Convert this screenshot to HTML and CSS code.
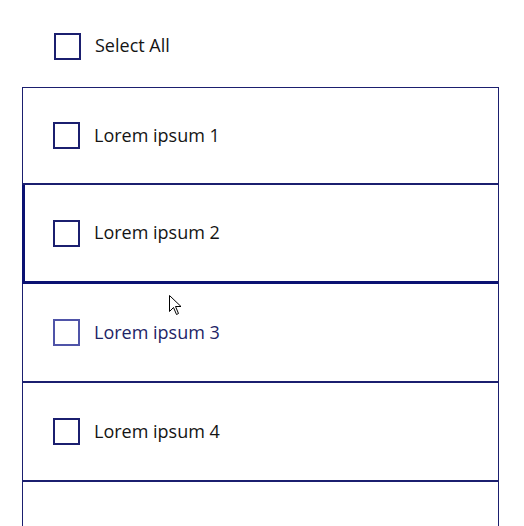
FILE: index.html
```html
<!DOCTYPE html>
<html>
<head>
<meta charset="utf-8">
<link rel="stylesheet" href="styles.css">
</head>
<body>
<div class="page">
  <div class="select-all">
    <span class="box"></span>
    <span class="label">Select All</span>
  </div>
  <div class="list">
    <div class="row first"><span class="box"></span><span class="label">Lorem ipsum 1</span></div>
    <div class="row selected"><span class="box"></span><span class="label">Lorem ipsum 2</span></div>
    <div class="row hover"><span class="box"></span><span class="label">Lorem ipsum 3</span></div>
    <div class="row"><span class="box"></span><span class="label">Lorem ipsum 4</span></div>
    <div class="row"></div>
  </div>
  <svg class="cursor" width="13" height="21" viewBox="0 0 13 21">
    <path d="M0.5 0.5 L0.5 16.5 L4.5 12.5 L7.5 19.5 L9.5 18.5 L6.5 11.5 L12 11.5 Z" fill="#fff" stroke="#000" stroke-width="1" stroke-linejoin="miter"/>
  </svg>
</div>
</body>
</html>
```
FILE: styles.css
```css
html, body {
  margin: 0;
  padding: 0;
  background: #ffffff;
}
.page {
  position: relative;
  width: 524px;
  height: 526px;
  overflow: hidden;
  font-family: "Open Sans", "Noto Sans", sans-serif;
  font-size: 18px;
  color: #141414;
}
.select-all {
  height: 87px;
  display: flex;
  align-items: flex-start;
  padding: 33px 0 0 54px;
  box-sizing: border-box;
}
.select-all .label {
  margin-left: 14px;
  line-height: 24px;
}
.box {
  display: inline-block;
  width: 27px;
  height: 27px;
  box-sizing: border-box;
  border: 2px solid #1b1f6f;
  background: #fff;
  flex: none;
}
.list {
  margin-left: 22px;
  width: 477px;
  box-sizing: border-box;
  border: 1px solid #1b1f6f;
  border-bottom: none;
}
.row {
  height: 99px;
  box-sizing: border-box;
  border-bottom: 2px solid #1b1f6f;
  display: flex;
  align-items: center;
  padding-left: 30px;
}
.row.first {
  height: 97px;
}
.row .label {
  margin-left: 14px;
  line-height: 24px;
  margin-bottom: 2px;
}
.row.selected {
  border-left: 3px solid #0b1272;
  border-bottom: 3px solid #0b1272;
  margin-left: -1px;
  padding-left: 28px;
}
.row.hover .box {
  border-color: #4f54a8;
}
.row.hover .label {
  color: #1e2466;
}
.cursor {
  position: absolute;
  left: 169px;
  top: 295px;
}
```
